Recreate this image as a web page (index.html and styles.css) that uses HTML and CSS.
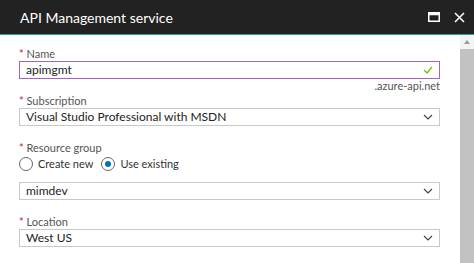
FILE: index.html
```html
<!DOCTYPE html>
<html lang="en">
<head>
  <meta charset="UTF-8">
  <title>API Management service</title>
  <link rel="stylesheet" href="styles.css">
</head>
<body>
  <div class="blade">
    <div class="header">
      <span class="title">API Management service</span>
      <span class="actions">
        <svg width="12" height="10" viewBox="0 0 12 10"><rect x="0.75" y="0.75" width="10.5" height="8.5" fill="none" stroke="#fff" stroke-width="1.5"/><rect x="0.75" y="0.75" width="10.5" height="2.5" fill="#fff"/></svg>
        <svg width="11" height="11" viewBox="0 0 11 11"><path d="M1 1 L10 10 M10 1 L1 10" stroke="#fff" stroke-width="1.5"/></svg>
      </span>
    </div>
    <div class="content">
      <div class="form">
        <div class="field tight">
          <label><span class="req">*</span> Name</label>
          <div class="box active">apimgmt
            <svg width="10" height="8" viewBox="0 0 10 8"><path d="M1 4 L4 7 L9 1" fill="none" stroke="#7fba00" stroke-width="1.3"/></svg>
          </div>
          <div class="suffix">.azure-api.net</div>
        </div>
        <div class="field">
          <label><span class="req">*</span> Subscription</label>
          <div class="box">Visual Studio Professional with MSDN
            <svg class="chev" width="10" height="6" viewBox="0 0 10 6"><path d="M1 1 L5 5 L9 1" fill="none" stroke="#444" stroke-width="1.2"/></svg>
          </div>
        </div>
        <div class="field">
          <label><span class="req">*</span> Resource group</label>
          <div class="radios">
            <span class="radio"><span class="dot"></span>Create new</span>
            <span class="radio checked"><span class="dot"></span>Use existing</span>
          </div>
          <div class="box">mimdev
            <svg class="chev" width="10" height="6" viewBox="0 0 10 6"><path d="M1 1 L5 5 L9 1" fill="none" stroke="#444" stroke-width="1.2"/></svg>
          </div>
        </div>
        <div class="field">
          <label><span class="req">*</span> Location</label>
          <div class="box">West US
            <svg class="chev" width="10" height="6" viewBox="0 0 10 6"><path d="M1 1 L5 5 L9 1" fill="none" stroke="#444" stroke-width="1.2"/></svg>
          </div>
        </div>
      </div>
      <div class="scrollbar">
        <div class="arrow"></div>
        <div class="thumb"></div>
      </div>
    </div>
  </div>
</body>
</html>
```
FILE: styles.css
```css
body {
  margin: 0;
  font-family: Lato, "Open Sans", sans-serif;
  background: #fff;
  overflow: hidden;
}
.blade {
  width: 474px;
  height: 263px;
  display: flex;
  flex-direction: column;
}
.header {
  height: 34px;
  background: #222222;
  border-bottom: 1px solid #2fa3a0;
  display: flex;
  align-items: center;
  justify-content: space-between;
  padding: 0 9px 0 20px;
  flex-shrink: 0;
}
.title {
  color: #fff;
  font-size: 14px;
}
.actions {
  display: flex;
  align-items: center;
  gap: 14px;
}
.content {
  flex: 1;
  display: flex;
}
.form {
  flex: 1;
  padding: 11px 20px 0 19px;
}
.field {
  margin-bottom: 14px;
}
.field.tight {
  margin-bottom: 0;
}
label {
  display: block;
  font-size: 11px;
  color: #555;
  height: 15px;
  line-height: 15px;
}
.req {
  color: #c4262e;
}
.box {
  height: 16px;
  border: 1px solid #c9c9c9;
  font-size: 12px;
  color: #222;
  line-height: 16px;
  padding: 0 6px;
  display: flex;
  align-items: center;
  justify-content: space-between;
}
.box.active {
  border-color: #a563c0;
}
.suffix {
  text-align: right;
  font-size: 11px;
  color: #555;
  height: 14px;
  line-height: 14px;
}
.radios {
  display: flex;
  gap: 8px;
  font-size: 11px;
  color: #333;
  height: 17px;
  align-items: center;
  margin-bottom: 10px;
}
.radio {
  display: flex;
  align-items: center;
  gap: 5px;
}
.dot {
  width: 12px;
  height: 12px;
  border: 1px solid #666;
  border-radius: 50%;
  position: relative;
}
.checked .dot::after {
  content: "";
  position: absolute;
  left: 3px;
  top: 3px;
  width: 6px;
  height: 6px;
  border-radius: 50%;
  background: #0072c6;
}
.scrollbar {
  width: 14px;
  display: flex;
  flex-direction: column;
  background: #f4f4f4;
}
.arrow {
  height: 14px;
  display: flex;
  justify-content: center;
  align-items: center;
}
.arrow::before {
  content: "";
  border-left: 3px solid transparent;
  border-right: 3px solid transparent;
  border-bottom: 4px solid #999;
}
.thumb {
  flex: 1;
  background: #c2c2c2;
}
```
